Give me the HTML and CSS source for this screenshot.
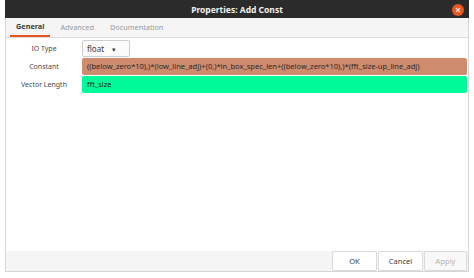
FILE: index.html
```html
<!DOCTYPE html>
<html lang="en">
<head>
  <meta charset="UTF-8">
  <title>Properties: Add Const</title>
  <link rel="stylesheet" href="styles.css">
</head>
<body>
<div class="dialog">
  <div class="titlebar">
    <span class="title">Properties: Add Const</span>
    <span class="close">
      <svg width="12" height="12" viewBox="0 0 12 12">
        <circle cx="6" cy="6" r="6" fill="#e95420"/>
        <path d="M4 4 L8 8 M8 4 L4 8" stroke="#fbd9cc" stroke-width="1.2"/>
      </svg>
    </span>
  </div>

  <div class="tabs">
    <div class="tab active">General</div>
    <div class="tab">Advanced</div>
    <div class="tab">Documentation</div>
  </div>

  <div class="content">
    <div class="row">
      <div class="label">IO Type</div>
      <div class="combo">float <span class="arrow">&#9662;</span></div>
    </div>
    <div class="row">
      <div class="label">Constant</div>
      <div class="field salmon">((below_zero*10),)*(low_line_adj)+(0,)*in_box_spec_len+((below_zero*10),)*(fft_size-up_line_adj)</div>
    </div>
    <div class="row">
      <div class="label">Vector Length</div>
      <div class="field green">fft_size</div>
    </div>
  </div>

  <div class="buttons">
    <button class="btn">OK</button>
    <button class="btn">Cancel</button>
    <button class="btn disabled">Apply</button>
  </div>
</div>
</body>
</html>
```

FILE: styles.css
```css
body {
  margin: 0;
  background: #fff;
  font-family: 'Noto Sans', sans-serif;
  font-size: 8px;
  color: #3c3c3c;
}
.dialog {
  margin-left: 5px;
  width: 464px;
  height: 272px;
  display: flex;
  flex-direction: column;
  border-left: 1px solid #d6d6d6;
  border-right: 1px solid #d6d6d6;
  border-bottom: 1px solid #d6d6d6;
  box-sizing: border-box;
}
.titlebar {
  height: 18px;
  background: #2b2b2b;
  color: #f0f0f0;
  display: flex;
  align-items: center;
  justify-content: center;
  position: relative;
  margin: 0 -1px;
}
.title {
  font-weight: bold;
  font-size: 8.5px;
}
.close {
  position: absolute;
  right: 5px;
  top: 4px;
  height: 12px;
}
.tabs {
  height: 19px;
  background: #f5f5f5;
  border-bottom: 1px solid #dcdcdc;
  display: flex;
  padding-left: 4px;
}
.tab {
  padding: 0 6px;
  margin-right: 4px;
  line-height: 18px;
  color: #9a9a9a;
  font-size: 7.3px;
}
.tab.active {
  color: #3c3c3c;
  font-weight: bold;
  border-bottom: 2px solid #e95420;
  line-height: 17px;
}
.content {
  flex: 1;
  background: #fff;
  padding-top: 2px;
  padding-right: 1px;
}
.row {
  display: flex;
  align-items: center;
  margin-bottom: 1px;
}
.label {
  width: 76px;
  text-align: center;
  font-size: 7px;
  color: #4a4a4a;
}
.combo {
  width: 48px;
  height: 17px;
  box-sizing: border-box;
  border: 1px solid #cfcfcf;
  border-radius: 2px;
  background: #fbfbfb;
  padding-left: 4px;
  line-height: 15px;
  font-size: 8px;
}
.arrow {
  margin-left: 6px;
  font-size: 7px;
}
.field {
  flex: 1;
  height: 17px;
  box-sizing: border-box;
  border-radius: 2px;
  padding-left: 5px;
  line-height: 17px;
  font-size: 7.5px;
  color: #2a2a2a;
  white-space: nowrap;
  overflow: hidden;
}
.salmon {
  background: #cf8b6e;
}
.green {
  background: #00fa9a;
}
.buttons {
  height: 20px;
  background: #f5f5f5;
  display: flex;
  justify-content: flex-end;
  padding-right: 1px;
}
.btn {
  font-family: 'Noto Sans', sans-serif;
  font-size: 7.5px;
  color: #3c3c3c;
  background: #fff;
  border: 1px solid #dadada;
  border-radius: 2px;
  margin-left: 1px;
  padding: 0;
  width: 45px;
  height: 20px;
}
.btn.disabled {
  width: 43px;
  color: #b0b0b0;
  background: #f8f8f8;
}
```
